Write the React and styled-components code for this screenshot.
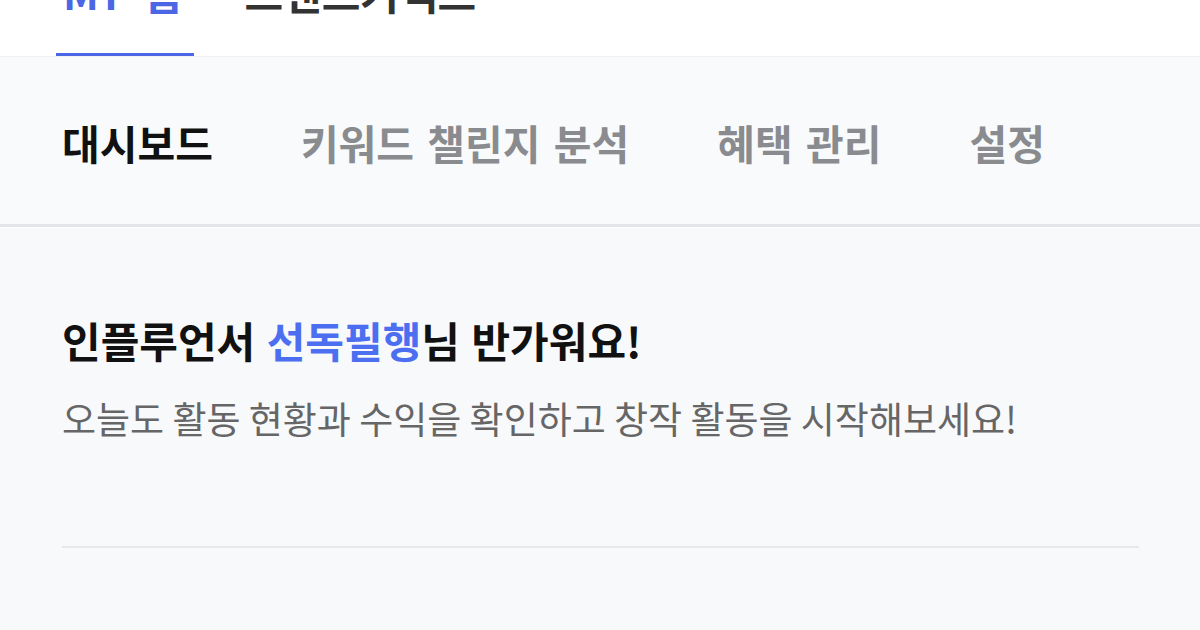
import React from "react";
import styled, { createGlobalStyle } from "styled-components";

const GlobalStyle = createGlobalStyle`
    *, *::before, *::after {
        box-sizing: border-box;
    }
    html, body {
        margin: 0;
        padding: 0;
        background: #f8f9fb;
    }
    body {
        font-family: "Noto Sans CJK KR", "Noto Sans", sans-serif;
        -webkit-font-smoothing: antialiased;
    }
`;

const topTabs = [
    { label: "MY 홈", active: true },
    { label: "브랜드커넥트", active: false },
];

const subTabs = [
    { label: "대시보드", active: true },
    { label: "키워드 챌린지 분석", active: false },
    { label: "혜택 관리", active: false },
    { label: "설정", active: false },
];

const App = () => {
    return (
        <>
            <GlobalStyle />
            <Page>
                <Header>
                    {topTabs.map((tab) => (
                        <TopTab key={tab.label} active={tab.active}>
                            {tab.label}
                        </TopTab>
                    ))}
                </Header>
                <SubNav>
                    {subTabs.map((tab) => (
                        <SubTab key={tab.label} active={tab.active}>
                            {tab.label}
                        </SubTab>
                    ))}
                </SubNav>
                <Content>
                    <Greeting>
                        인플루언서 <Name>선독필행</Name>님 반가워요!
                    </Greeting>
                    <Desc>
                        오늘도 활동 현황과 수익을 확인하고 창작 활동을
                        시작해보세요!
                    </Desc>
                    <Divider />
                </Content>
            </Page>
        </>
    );
};

const Page = styled.div`
    width: 1200px;
    min-height: 630px;
    background: #f8f9fb;
`;

const Header = styled.div`
    display: flex;
    align-items: flex-end;
    gap: 43px;
    height: 57px;
    padding-left: 56px;
    background: #ffffff;
    border-bottom: 1px solid #eef0f3;
    overflow: hidden;
`;

const TopTab = styled.div.withConfig({
    shouldForwardProp: (p) => p !== "active",
})`
    flex-shrink: 0;
    padding: 0 11px 40px 7px;
    font-size: 42px;
    line-height: 42px;
    font-weight: 700;
    word-spacing: 12px;
    white-space: nowrap;
    color: ${(p) => (p.active ? "#4b67e6" : "#333333")};
    border-bottom: 3px solid
        ${(p) => (p.active ? "#4b67e6" : "transparent")};
`;

const SubNav = styled.div`
    display: flex;
    align-items: center;
    gap: 88px;
    height: 170px;
    padding: 3px 62px 0;
    background: #f8fafc;
    border-bottom: 3px solid #e2e5e9;
    box-shadow: 0 1px 0 #ffffff;
`;

const SubTab = styled.div.withConfig({
    shouldForwardProp: (p) => p !== "active",
})`
    font-size: 41px;
    line-height: 1;
    font-weight: 700;
    word-spacing: 4px;
    color: ${(p) => (p.active ? "#111111" : "#8a8b8e")};
    white-space: nowrap;
`;

const Content = styled.div`
    display: flex;
    flex-direction: column;
    padding: 88px 61px 0 62px;
`;

const Greeting = styled.h1`
    margin: 0;
    font-size: 42px;
    line-height: 50px;
    font-weight: 700;
    word-spacing: 2px;
    color: #111111;
`;

const Name = styled.span`
    color: #4b6ff0;
`;

const Desc = styled.p`
    margin: 31px 0 0;
    font-size: 37px;
    line-height: 44px;
    font-weight: 400;
    color: #666666;
    white-space: nowrap;
`;

const Divider = styled.hr`
    margin: 106px 0 0;
    border: 0;
    height: 2px;
    background: #e6e8eb;
`;

export default App;
